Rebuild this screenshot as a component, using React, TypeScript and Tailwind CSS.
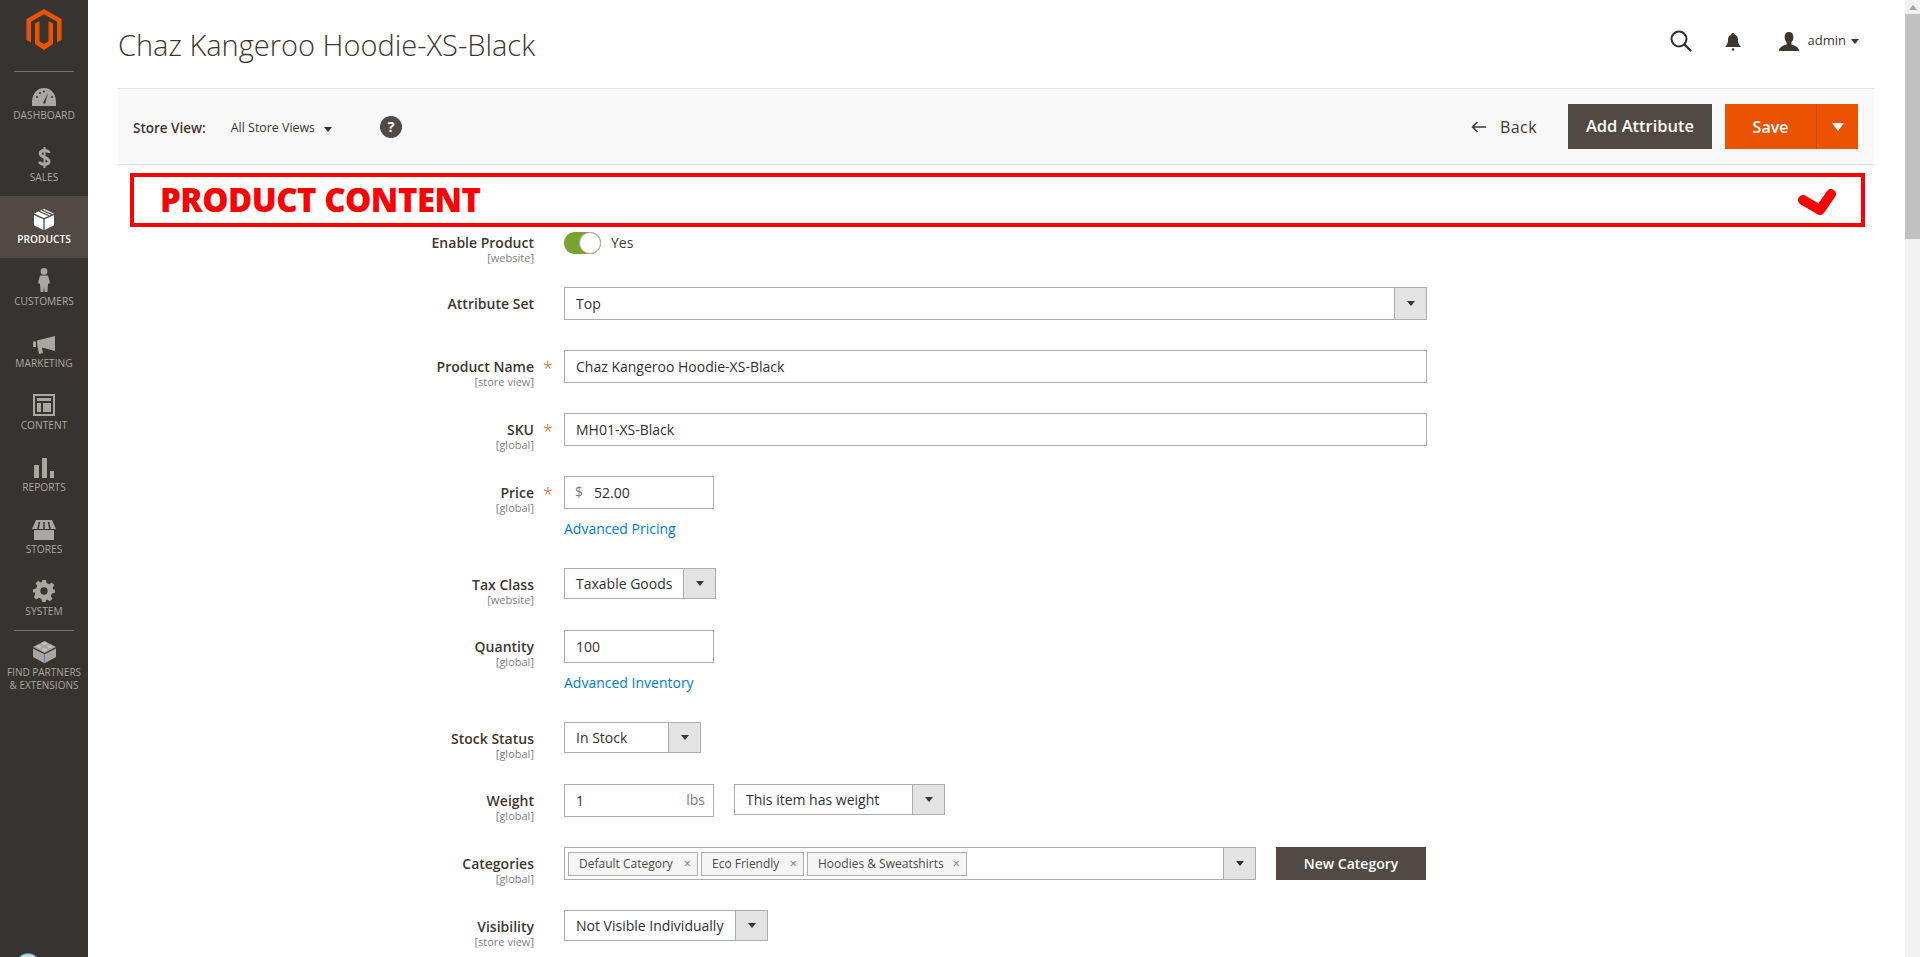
import type { ReactNode } from 'react';

const fontStack = 'font-["Open_Sans",sans-serif]';

const Caret = ({ className = 'border-t-[#41362f]' }: { className?: string }) => (
  <span className={`inline-block h-0 w-0 border-x-[4px] border-t-[5px] border-x-transparent ${className}`} />
);

const navIcons: Record<string, ReactNode> = {
  dashboard: (
    <svg width="24" height="18" viewBox="0 0 24 18">
      <path d="M0 18 C-1 6 5 0 12 0 C19 0 25 6 24 18 Z" fill="#aaa6a0" />
      <path d="M11 15 L16 5 L13 16 Z" fill="#3a3532" />
      <circle cx="5" cy="9" r="1" fill="#3a3532" />
      <circle cx="8" cy="5" r="1" fill="#3a3532" />
      <circle cx="12" cy="3.5" r="1" fill="#3a3532" />
      <circle cx="20" cy="9" r="1" fill="#3a3532" />
    </svg>
  ),
  sales: (
    <svg width="13" height="21" viewBox="0 0 13 21" fill="none" stroke="#aaa6a0">
      <path d="M11 6 C11 2.6 2.2 2.4 2.2 6.4 C2.2 11 11 9.6 11 14.4 C11 18.4 2 18 1.6 14.6" strokeWidth="3" />
      <path d="M6.5 0 V21" strokeWidth="2" />
    </svg>
  ),
  products: (
    <svg width="20" height="21" viewBox="0 0 20 21">
      <path d="M10 0 L20 4.5 L10 9 L0 4.5 Z" fill="#fff" />
      <path d="M5 2.2 L15 6.8 M8 1 L18 5.6" stroke="#514943" strokeWidth="1.2" />
      <path d="M0 6 L9.3 10.2 V21 L0 16.2 Z" fill="#fff" />
      <path d="M20 6 L10.7 10.2 V21 L20 16.2 Z" fill="#fff" />
      <path d="M9.7 10 V21" stroke="#4aa3df" strokeWidth="1" />
    </svg>
  ),
  customers: (
    <svg width="12" height="24" viewBox="0 0 12 24">
      <circle cx="6" cy="3.4" r="3.4" fill="#aaa6a0" />
      <path d="M2 7.6 H10 L12 15 L10 16 L9.4 24 H6.6 L6 18 L5.4 24 H2.6 L2 16 L0 15 Z" fill="#aaa6a0" />
    </svg>
  ),
  marketing: (
    <svg width="22" height="18" viewBox="0 0 22 18">
      <path d="M0 5.5 H3 V11 H0 Z" fill="#aaa6a0" />
      <path d="M4 4.5 L22 0 V15 L9 11.5 L10 17 L6 18 L4.5 11 Z" fill="#aaa6a0" />
    </svg>
  ),
  content: (
    <svg width="22" height="22" viewBox="0 0 22 22">
      <path d="M0 0 H22 V22 H0 Z M2 2 V20 H20 V2 Z" fill="#aaa6a0" fillRule="evenodd" />
      <path d="M4 4 H18 V7 H4 Z M4 9 H8 V18 H4 Z M10 9 H18 V18 H10 Z" fill="#aaa6a0" />
    </svg>
  ),
  reports: (
    <svg width="20" height="20" viewBox="0 0 20 20">
      <path d="M0 7 H5 V20 H0 Z M8 0 H13 V20 H8 Z M16 13 H20 V20 H16 Z" fill="#aaa6a0" />
    </svg>
  ),
  stores: (
    <svg width="24" height="20" viewBox="0 0 24 20">
      <path d="M4 0 H20 L24 9 H0 Z" fill="#aaa6a0" />
      <path d="M7.5 2 L6 9 M12 2 V9 M16.5 2 L18 9" stroke="#3a3532" strokeWidth="1.5" />
      <path d="M2 10 H22 V20 H2 Z" fill="#aaa6a0" />
    </svg>
  ),
  system: (
    <svg width="22" height="22" viewBox="0 0 24 24">
      <path
        fillRule="evenodd"
        fill="#aaa6a0"
        d="M10 0 H14 L14.8 3.4 L17.6 4.6 L20.5 2.8 L23.2 5.5 L21.4 8.4 L22.6 11 L24 10 V14 L20.6 14.8 L19.4 17.6 L21.2 20.5 L18.5 23.2 L15.6 21.4 L14 22 L14 24 H10 L9.2 20.6 L6.4 19.4 L3.5 21.2 L0.8 18.5 L2.6 15.6 L1.4 13 L0 14 V10 L3.4 9.2 L4.6 6.4 L2.8 3.5 L5.5 0.8 L8.4 2.6 L10 2 Z M12 8 A4 4 0 1 0 12 16 A4 4 0 1 0 12 8 Z"
      />
    </svg>
  ),
  partners: (
    <svg width="23" height="22" viewBox="0 0 23 22">
      <path d="M11.5 0 L23 6 L11.5 12 L0 6 Z" fill="#aaa6a0" />
      <ellipse cx="11.5" cy="2.6" rx="2.6" ry="1.3" fill="#c6c2bd" />
      <ellipse cx="6" cy="5.6" rx="2.6" ry="1.3" fill="#c6c2bd" />
      <ellipse cx="17" cy="5.6" rx="2.6" ry="1.3" fill="#c6c2bd" />
      <ellipse cx="11.5" cy="8.8" rx="2.6" ry="1.3" fill="#c6c2bd" />
      <path d="M0 7.5 L11 13 V22 L0 16 Z M23 7.5 L12 13 V22 L23 16 Z" fill="#aaa6a0" />
      <path d="M11.5 13 V22" stroke="#4aa3df" strokeWidth="0.8" />
    </svg>
  ),
};

const navItems = [
  { key: 'dashboard', label: 'DASHBOARD' },
  { key: 'sales', label: 'SALES' },
  { key: 'products', label: 'PRODUCTS', active: true },
  { key: 'customers', label: 'CUSTOMERS' },
  { key: 'marketing', label: 'MARKETING' },
  { key: 'content', label: 'CONTENT' },
  { key: 'reports', label: 'REPORTS' },
  { key: 'stores', label: 'STORES' },
  { key: 'system', label: 'SYSTEM' },
];

const Sidebar = () => (
  <aside className="relative flex h-full w-[88px] shrink-0 flex-col items-center overflow-hidden bg-[#373330]">
    {/* Logo */}
    <div className="flex h-[72px] w-full flex-col items-center pt-[9px]">
      <svg width="36" height="41" viewBox="0 0 36 41">
        <path d="M18 0 L35.5 10 V31 L31 33.5 V12.7 L18 5.3 L5 12.7 V33.5 L0.5 31 V10 Z" fill="#eb5202" />
        <path d="M9 14.5 L13.5 12 V32.5 L18 35 L22.5 32.5 V12 L27 14.5 V35 L18 41 L9 35 Z" fill="#eb5202" />
      </svg>
    </div>
    <div className="-mt-px h-px w-[60px] bg-[#736e69]" />
    {navItems.map((item) => (
      <div
        key={item.key}
        className={
          item.active
            ? 'flex h-[62px] w-full flex-col items-center bg-[#514943] text-white'
            : 'flex h-[62px] w-full flex-col items-center text-[#aaa6a0]'
        }
      >
        <div className="flex h-[36px] items-end justify-center pb-[2px]">{navIcons[item.key]}</div>
        <span className={item.active ? 'text-[10.2px] font-semibold leading-[14px]' : 'text-[10.2px] leading-[14px]'}>
          {item.label}
        </span>
      </div>
    ))}
    <div className="h-px w-[60px] bg-[#736e69]" />
    <div className="flex w-full flex-col items-center pt-[10px] text-[#aaa6a0]">
      {navIcons.partners}
      <span className="mt-[3px] whitespace-nowrap text-center text-[10px] leading-[13px]">
        FIND PARTNERS
        <br />& EXTENSIONS
      </span>
    </div>
    <div className="absolute bottom-[-20px] left-[16px] h-[24px] w-[24px] rounded-full border-t border-[#3b8fc4] bg-[#cfd8dc]" />
  </aside>
);

const Header = () => (
  <header className="flex h-[88px] items-center justify-between">
    <h1 className="text-[29px] font-light leading-none text-[#41362f]">Chaz Kangeroo Hoodie-XS-Black</h1>
    <div className="-mt-[6px] mr-[15px] flex items-center">
      <svg width="22" height="22" viewBox="0 0 22 22" fill="none" stroke="#303030" strokeWidth="2">
        <circle cx="9" cy="9" r="7.5" />
        <path d="M14.5 14.5 L21 21" strokeWidth="2.4" />
      </svg>
      <svg className="ml-[33px] mt-[2px]" width="16" height="18" viewBox="0 0 16 18" fill="#41362f">
        <path d="M8 0 C9 0 9.6.6 9.6 1.4 C12.4 2.2 13 4.6 13 7 C13 10 14 12 16 14 H0 C2 12 3 10 3 7 C3 4.6 3.6 2.2 6.4 1.4 C6.4.6 7 0 8 0 Z" />
        <circle cx="8" cy="16.5" r="1.3" />
      </svg>
      <svg className="ml-[38px]" width="20" height="19" viewBox="0 0 20 19" fill="#41362f">
        <path d="M10 0 C13 0 14.4 2 14.4 5 C14.4 7.6 13.4 9.4 12.4 10.6 V12.6 C15 13.8 20 14.4 20 19 H0 C0 14.4 5 13.8 7.6 12.6 V10.6 C6.6 9.4 5.6 7.6 5.6 5 C5.6 2 7 0 10 0 Z" />
      </svg>
      <span className="-mt-[2px] ml-[9px] text-[13px] leading-none text-[#41362f]">admin</span>
      <span className="ml-[5px] flex items-center">
        <Caret />
      </span>
    </div>
  </header>
);

const Toolbar = () => (
  <div className="flex h-[77px] items-center justify-between border-y border-[#e3e3e3] bg-[#f8f8f8] pl-[15px] pr-[16px]">
    <div className="flex items-center pt-[3px]">
      <span className="text-[13.5px] font-semibold text-[#41362f]">Store View:</span>
      <span className="ml-[25px] mt-px text-[12.4px] text-[#41362f]">All Store Views</span>
      <span className="ml-[9px] mt-[2px] flex items-center">
        <Caret className="border-t-[#303030]" />
      </span>
      <span className="ml-[48px] -mt-[3px] flex h-[22px] w-[22px] items-center justify-center rounded-full bg-[#514943] text-[15px] font-bold text-white">
        ?
      </span>
    </div>
    <div className="flex items-center">
      <svg width="15" height="12" viewBox="0 0 15 12" fill="none" stroke="#41362f" strokeWidth="1.6">
        <path d="M15 6 H1.5 M6.5 1 L1.5 6 L6.5 11" />
      </svg>
      <span className="ml-[14px] text-[16px] font-medium tracking-[0.4px] text-[#41362f]">Back</span>
      <button className="ml-[31px] h-[45px] w-[144px] bg-[#514943] text-[16.5px] font-semibold text-white">Add Attribute</button>
      <div className="ml-[13px] flex h-[45px] w-[133px] bg-[#eb5202] text-white">
        <button className="w-[92px] border-r border-[#c94602] text-[16px] font-semibold">Save</button>
        <span className="flex flex-1 items-center justify-center">
          <span className="inline-block h-0 w-0 border-x-[6px] border-t-[8px] border-x-transparent border-t-white" />
        </span>
      </div>
    </div>
  </div>
);

// Annotation drawn over the screenshot
const ContentBanner = () => (
  <div className="ml-[12px] mt-[8px] flex h-[54px] w-[1735px] items-center justify-between border-[4px] border-[#ff0000] pl-[26px] pr-[23px]">
    <span className="-mt-px text-[33px] font-extrabold leading-none tracking-[-0.5px] text-[#ff0000]">PRODUCT CONTENT</span>
    <svg className="mt-[4px]" width="40" height="28" viewBox="0 0 40 28" fill="none">
      <path d="M5 12 L22 22 L33 6" stroke="#ff0000" strokeWidth="10" strokeLinecap="round" strokeLinejoin="round" />
    </svg>
  </div>
);

const Row = ({
  label,
  scope,
  required,
  className,
  children,
}: {
  label: string;
  scope?: string;
  required?: boolean;
  className: string;
  children: ReactNode;
}) => (
  <div className={`flex ${className}`}>
    <div className="w-[416px] text-right">
      <div className="text-[14px] font-semibold leading-[33px] text-[#41362f]">{label}</div>
      {scope && <div className="-mt-[6px] text-[11px] leading-[10px] text-[#808080]">[{scope}]</div>}
    </div>
    <div className="w-[30px] pl-[9px] pt-[2px] text-[18px] font-light leading-[33px] text-[#eb5202]">{required ? '*' : ''}</div>
    <div>{children}</div>
  </div>
);

const Select = ({ value, width, height = 'h-[31px]' }: { value: string; width: string; height?: string }) => (
  <div className={`flex items-stretch border border-[#adadad] bg-white ${width} ${height}`}>
    <span className="flex flex-1 items-center pl-[11px] text-[14px] text-[#303030]">{value}</span>
    <span className="flex w-[32px] items-center justify-center border-l border-[#adadad] bg-[#e3e3e3]">
      <Caret />
    </span>
  </div>
);

const Input = ({ value, width }: { value: string; width: string }) => (
  <div className={`flex h-[33px] items-center border border-[#adadad] bg-white pl-[11px] text-[14px] text-[#303030] ${width}`}>
    {value}
  </div>
);

const Chip = ({ label, width }: { label: string; width: string }) => (
  <span className={`flex h-[24px] items-center justify-between border border-[#adadad] bg-[#f5f5f5] pl-[10px] pr-[6px] text-[12px] text-[#514943] ${width}`}>
    {label}
    <span className="text-[13px] leading-none text-[#808080]">×</span>
  </span>
);

const ProductForm = () => (
  <div>
    <Row label="Enable Product" scope="website" className="-mt-px h-[61px]">
      <div className="flex h-[33px] items-center">
        <span className="flex h-[22px] w-[37px] justify-end rounded-full bg-[#79a22e]">
          <span className="h-[22px] w-[22px] rounded-full border border-[#adadad] bg-white" />
        </span>
        <span className="ml-[10px] text-[14px] text-[#41362f]">Yes</span>
      </div>
    </Row>
    <Row label="Attribute Set" className="h-[63px]">
      <Select value="Top" width="w-[863px]" height="h-[33px]" />
    </Row>
    <Row label="Product Name" scope="store view" required className="h-[63px]">
      <Input value="Chaz Kangeroo Hoodie-XS-Black" width="w-[863px]" />
    </Row>
    <Row label="SKU" scope="global" required className="h-[63px]">
      <Input value="MH01-XS-Black" width="w-[863px]" />
    </Row>
    <Row label="Price" scope="global" required className="h-[92px]">
      <div className="flex h-[33px] w-[150px] items-center border border-[#adadad] bg-white pl-[10px] text-[14px] text-[#303030]">
        <span className="-mt-[2px] text-[#808080]">$</span>
        <span className="ml-[11px]">52.00</span>
      </div>
      <a className="mt-[10px] block text-[14px] leading-[20px] text-[#007bdb]">Advanced Pricing</a>
    </Row>
    <Row label="Tax Class" scope="website" className="h-[62px]">
      <Select value="Taxable Goods" width="w-[152px]" />
    </Row>
    <Row label="Quantity" scope="global" className="h-[92px]">
      <Input value="100" width="w-[150px]" />
      <a className="mt-[10px] block text-[14px] leading-[20px] text-[#007bdb]">Advanced Inventory</a>
    </Row>
    <Row label="Stock Status" scope="global" className="h-[62px]">
      <Select value="In Stock" width="w-[137px]" />
    </Row>
    <Row label="Weight" scope="global" className="h-[63px]">
      <div className="flex">
        <div className="flex h-[33px] w-[150px] items-center justify-between border border-[#adadad] bg-white pl-[11px] pr-[8px] text-[14px] text-[#303030]">
          <span>1</span>
          <span className="-mt-[2px] text-[#808080]">lbs</span>
        </div>
        <div className="ml-[20px]">
          <Select value="This item has weight" width="w-[211px]" />
        </div>
      </div>
    </Row>
    <Row label="Categories" scope="global" className="h-[63px]">
      <div className="flex">
        <div className="flex h-[33px] w-[692px] items-stretch border border-[#adadad] bg-white">
          <div className="flex flex-1 items-center gap-[3px] pl-[3px]">
            <Chip label="Default Category" width="w-[130px]" />
            <Chip label="Eco Friendly" width="w-[103px]" />
            <Chip label="Hoodies & Sweatshirts" width="w-[160px]" />
          </div>
          <span className="flex w-[32px] items-center justify-center border-l border-[#adadad] bg-[#e3e3e3]">
            <Caret className="border-t-[#303030]" />
          </span>
        </div>
        <button className="ml-[20px] h-[33px] w-[150px] bg-[#514943] text-[14px] font-semibold text-white">New Category</button>
      </div>
    </Row>
    <Row label="Visibility" scope="store view" className="h-[47px]">
      <Select value="Not Visible Individually" width="w-[204px]" />
    </Row>
  </div>
);

const Scrollbar = () => (
  <div className="flex h-full w-[15px] shrink-0 flex-col items-center bg-[#f1f1f1]">
    <div className="flex h-[14px] items-center justify-center">
      <span className="inline-block h-0 w-0 border-x-[4px] border-b-[5px] border-x-transparent border-b-[#a3a3a3]" />
    </div>
    <div className="h-[225px] w-full bg-[#c1c1c1]" />
  </div>
);

export default function App() {
  return (
    <div className={`flex h-[957px] w-[1920px] overflow-hidden bg-white ${fontStack}`}>
      <Sidebar />
      <main className="min-w-0 flex-1 overflow-hidden pl-[30px] pr-[31px]">
        <Header />
        <Toolbar />
        <ContentBanner />
        <ProductForm />
      </main>
      <Scrollbar />
    </div>
  );
}
